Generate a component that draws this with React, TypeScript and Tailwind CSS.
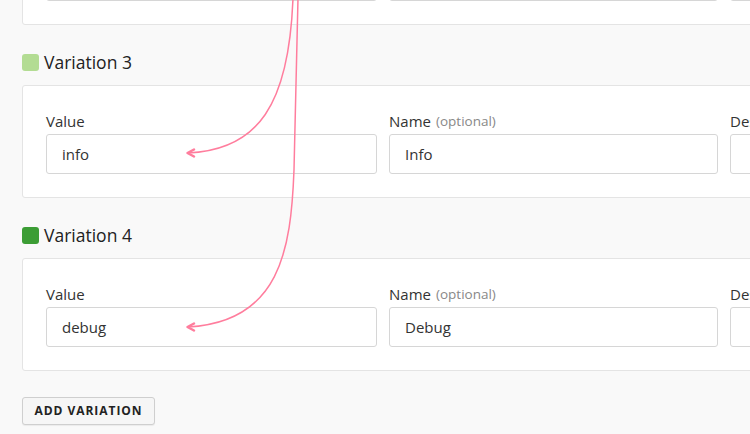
import React from "react";

type Variation = {
  title?: string;
  swatch?: string;
  value: string;
  name: string;
  showText: boolean;
};

const variations: Variation[] = [
  { value: "", name: "", showText: false },
  { title: "Variation 3", swatch: "bg-[#b3dc93]", value: "info", name: "Info", showText: true },
  { title: "Variation 4", swatch: "bg-[#3c9d35]", value: "debug", name: "Debug", showText: true },
];

function Field({ label, hint, value, width }: { label?: string; hint?: string; value: string; width: string }) {
  return (
    <div className={`flex flex-col shrink-0 ${width}`}>
      <div className="h-[20px] flex items-center text-[15px] text-[#333] whitespace-nowrap">
        {label}
        {hint && <span className="ml-[5px] text-[13.5px] text-[#888]">{hint}</span>}
      </div>
      <div className="mt-[3px] h-[40px] rounded-[3px] border border-[#d6d6d6] bg-white px-[15px] flex items-center text-[15px] text-[#333]">
        {value}
      </div>
    </div>
  );
}

function Card({ v }: { v: Variation }) {
  return (
    <div className="w-[1060px] h-[113px] border border-[#e4e4e4] rounded-[3px] bg-white pt-[25px] pl-[23px] flex gap-[12px]">
      <Field label={v.showText ? "Value" : undefined} value={v.value} width="w-[331px]" />
      <Field
        label={v.showText ? "Name" : undefined}
        hint={v.showText ? "(optional)" : undefined}
        value={v.name}
        width="w-[329px]"
      />
      <Field
        label={v.showText ? "Description" : undefined}
        hint={v.showText ? "(optional)" : undefined}
        value=""
        width="w-[330px]"
      />
    </div>
  );
}

export default function App() {
  return (
    <div
      className="relative w-[750px] h-[434px] overflow-hidden bg-[#f9f9f9] text-[#333]"
      style={{ fontFamily: '"Open Sans", "Noto Sans", sans-serif' }}
    >
      <div className="pl-[22px] -mt-[88px] flex flex-col">
        {variations.map((v, i) => (
          <div key={i} className="flex flex-col">
            {v.title && (
              <div className="mt-[25px] mb-[11px] h-[24px] flex items-center gap-[5px]">
                <span className={`w-[17px] h-[17px] rounded-[3px] ${v.swatch}`} />
                <span className="text-[17.5px] text-[#222]">{v.title}</span>
              </div>
            )}
            <Card v={v} />
          </div>
        ))}
        <div className="mt-[26px]">
          <button className="h-[28px] w-[133px] rounded-[3px] border border-[#cfcfcf] bg-[#f6f6f6] shadow-[0_1px_1px_rgba(0,0,0,0.06)] text-[12px] font-bold tracking-[0.08em] text-[#222]">
            ADD VARIATION
          </button>
        </div>
      </div>

      <svg className="absolute inset-0 pointer-events-none" width="750" height="434" viewBox="0 0 750 434" fill="none">
        <g stroke="#ff7d9d" strokeLinecap="round" strokeLinejoin="round">
          <path d="M293,-2 C289,105 258,150 188,153" strokeWidth="1.5" />
          <path d="M194,149.5 L187.5,153 L194,156.5" strokeWidth="2.5" />
          <path d="M298,-2 L294,170 C291,250 280,322 188,327" strokeWidth="1.5" />
          <path d="M194,323.5 L187.5,327 L194,330.5" strokeWidth="2.5" />
        </g>
      </svg>
    </div>
  );
}
